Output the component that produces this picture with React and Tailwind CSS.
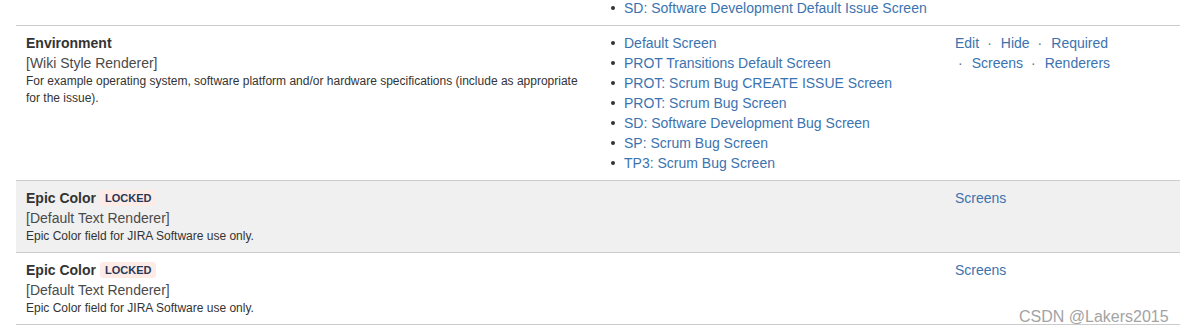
import React from 'react';

const font = { fontFamily: '"Liberation Sans", Arial, Helvetica, sans-serif' };

const environmentScreens = [
  'Default Screen',
  'PROT Transitions Default Screen',
  'PROT: Scrum Bug CREATE ISSUE Screen',
  'PROT: Scrum Bug Screen',
  'SD: Software Development Bug Screen',
  'SP: Scrum Bug Screen',
  'TP3: Scrum Bug Screen',
];

function ScreenList({ items }) {
  return (
    <ul className="flex flex-col">
      {items.map((item) => (
        <li key={item} className="flex items-center h-[20px]">
          <span className="w-[4px] h-[4px] rounded-full bg-[#333] ml-[1px] mr-[9px] shrink-0" />
          <a href="#" className="text-[14px] leading-[20px] text-[#3b73af] whitespace-nowrap">
            {item}
          </a>
        </li>
      ))}
    </ul>
  );
}

function Operations({ items }) {
  return (
    <ul className="flex flex-wrap gap-x-[5px] max-w-[170px] text-[14px] leading-[20px]">
      {items.map((item, i) => (
        <li key={item} className="flex whitespace-nowrap">
          {i > 0 && <span className="ml-[3px] mr-[9px] text-[#707070]">·</span>}
          <a href="#" className="text-[#3b73af]">{item}</a>
        </li>
      ))}
    </ul>
  );
}

function FieldName({ name, locked, renderer, description }) {
  return (
    <div className="text-[#333]">
      <div className="flex items-center h-[20px]">
        <span className="text-[14px] leading-[20px] font-bold">{name}</span>
        {locked && (
          <span className="ml-[4px] px-[5px] h-[16px] leading-[16px] rounded-[3px] bg-[#ffebe6] text-[#253858] text-[11px] font-bold uppercase">
            Locked
          </span>
        )}
      </div>
      <div className="text-[14px] leading-[20px] text-[#4a4a4a]">{renderer}</div>
      <div className="text-[12px] leading-[17px]">{description}</div>
    </div>
  );
}

function Row({ gray, children }) {
  return (
    <div className={`flex border-b border-[#ccc] ${gray ? 'bg-[#f0f0f0]' : 'bg-white'}`}>
      {children}
    </div>
  );
}

export default function App() {
  return (
    <div style={font} className="relative w-[1180px] h-[334px] bg-white overflow-hidden">
      <div className="ml-[16px]">
        <div className="flex h-[26px] border-b border-[#ccc]">
          <div className="w-[584px]" />
          <div className="w-[345px] pl-[10px] -mt-[2px]">
            <ScreenList items={['SD: Software Development Default Issue Screen']} />
          </div>
        </div>

        <Row>
          <div className="w-[584px] py-[7px] px-[10px]">
            <FieldName
              name="Environment"
              renderer="[Wiki Style Renderer]"
              description="For example operating system, software platform and/or hardware specifications (include as appropriate for the issue)."
            />
          </div>
          <div className="w-[345px] py-[7px] pl-[10px]">
            <ScreenList items={environmentScreens} />
          </div>
          <div className="flex-1 py-[7px] pl-[10px]">
            <Operations items={['Edit', 'Hide', 'Required', 'Screens', 'Renderers']} />
          </div>
        </Row>

        {[true, false].map((gray, i) => (
          <Row key={i} gray={gray}>
            <div className="w-[584px] py-[7px] px-[10px]">
              <FieldName
                name="Epic Color"
                locked
                renderer="[Default Text Renderer]"
                description="Epic Color field for JIRA Software use only."
              />
            </div>
            <div className="w-[345px]" />
            <div className="flex-1 py-[7px] pl-[10px]">
              <Operations items={['Screens']} />
            </div>
          </Row>
        ))}
      </div>

      <div className="absolute left-[1019px] top-[308px] text-[16px] leading-[18px] text-[#a3a3a3] whitespace-nowrap">
        CSDN @Lakers2015
      </div>
    </div>
  );
}
